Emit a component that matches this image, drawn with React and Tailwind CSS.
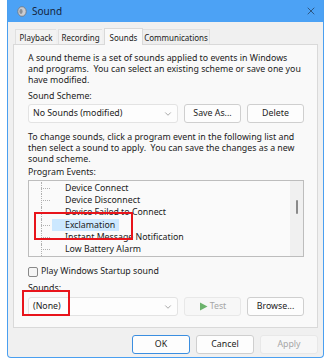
import { ChevronDown, X } from 'lucide-react';

const font = { fontFamily: '"Noto Sans", "Open Sans", sans-serif' };

function Dropdown({ value }) {
  return (
    <div className="flex-1 h-[19px] bg-[#fdfdfd] border border-[#e3e3e3] rounded-[3px] flex items-center justify-between pl-[4px] pr-[4px]">
      <span>{value}</span>
      <ChevronDown size={10} strokeWidth={1.2} className="text-[#555]" />
    </div>
  );
}

function Button({ children, disabled, primary, className = '' }) {
  return (
    <div
      className={`h-[19px] w-[57px] flex items-center justify-center rounded-[3px] border ${
        primary ? 'border-[#3b8ee0]' : disabled ? 'border-[#e8e8e8]' : 'border-[#cfcfcf]'
      } ${disabled ? 'bg-[#f7f7f7] text-[#a6a6a6]' : 'bg-[#fdfdfd] text-[#1b1b1b]'} ${className}`}
    >
      {children}
    </div>
  );
}

const events = [
  'Device Connect',
  'Device Disconnect',
  'Device Failed to Connect',
  'Exclamation',
  'Instant Message Notification',
  'Low Battery Alarm',
];

export default function App() {
  return (
    <div className="w-[335px] h-[363px] bg-white text-[8.8px] text-[#1b1b1b] leading-[11px] relative" style={font}>
      <div className="ml-[7px] w-[317px] h-[358px] border-x border-b border-[#4a9ff0] rounded-b-[4px] bg-[#f0f0f0] flex flex-col">
        {/* title bar */}
        <div className="h-[22px] bg-[#4ca2f5] flex items-center pl-[9px] pr-[6px]">
          <svg width="10" height="11" viewBox="0 0 10 11" className="mr-[5px]">
            <ellipse cx="5" cy="5.5" rx="4.2" ry="4.8" fill="#c9ccd2" stroke="#6f747b" strokeWidth="0.8" />
            <ellipse cx="4" cy="5.5" rx="1.6" ry="2.4" fill="#8a8f96" />
          </svg>
          <span className="text-[10px] text-[#14233a]">Sound</span>
          <X size={12} strokeWidth={1.3} className="ml-auto text-[#1c2e45]" />
        </div>

        {/* tabs */}
        <div className="flex items-end pl-[7px] mt-[6px] h-[16px] text-[8px]">
          <div className="h-[15px] w-[41px] flex items-center justify-center bg-[#f3f3f3] border-t border-l border-[#e0e0e0]">Playback</div>
          <div className="h-[15px] w-[44px] ml-[2px] flex items-center justify-center bg-[#f3f3f3] border-t border-l border-[#e0e0e0]">Recording</div>
          <div className="h-[17px] w-[39px] ml-[2px] flex items-center justify-center bg-[#f9f9f9] border-x border-t border-[#d9d9d9] relative top-[1px] z-10">Sounds</div>
          <div className="h-[15px] w-[67px] flex items-center justify-center bg-[#eeeeee] border-t border-r border-[#e0e0e0]">Communications</div>
        </div>

        {/* panel */}
        <div className="mx-[5px] h-[284px] bg-[#f9f9f9] border border-[#d9d9d9] pl-[14px] pr-[13px] pt-[8px] relative">
          <p>
            A sound theme is a set of sounds applied to events in Windows and programs.&nbsp; You can select an existing scheme or save one you have modified.
          </p>
          <p className="mt-[5px]">Sound Scheme:</p>
          <div className="flex gap-[6px] mt-[2px]">
            <Dropdown value="No Sounds (modified)" />
            <Button>Save As...</Button>
            <Button>Delete</Button>
          </div>
          <p className="mt-[9px]">
            To change sounds, click a program event in the following list and then select a sound to apply.&nbsp; You can save the changes as a new sound scheme.
          </p>
          <p className="mt-[2px]">Program Events:</p>
          <div className="mt-[2px] h-[77px] border border-[#bdbdbd] bg-[#fafafa] flex">
            <div className="flex-1 flex flex-col pt-[1px]">
              {events.map((e) => (
                <div key={e} className="h-[12.6px] flex items-center relative">
                  <div className="absolute left-[12px] top-0 bottom-0 border-l border-dotted border-[#b0b0b0]" />
                  <div className="ml-[12px] w-[9px] border-t border-dotted border-[#b0b0b0]" />
                  <div className={`ml-[2px] pl-[13px] pr-[4px] h-[12px] flex items-center ${e === 'Exclamation' ? 'bg-[#cce8ff]' : ''}`}>
                    {e}
                  </div>
                </div>
              ))}
            </div>
            <div className="w-[13px] bg-[#f0f0f0] flex justify-center pt-[19px]">
              <div className="w-[2px] h-[14px] bg-[#8a8a8a] rounded-full" />
            </div>
          </div>
          <div className="flex items-center mt-[9px]">
            <div className="w-[10px] h-[10px] border border-[#888] rounded-[2px] bg-[#f5f5f5] mr-[3px]" />
            <span>Play Windows Startup sound</span>
          </div>
          <p className="mt-[6px]">Sounds:</p>
          <div className="flex gap-[6px] mt-[3px]">
            <Dropdown value="(None)" />
            <Button disabled>
              <svg width="9" height="9" viewBox="0 0 9 9" className="mr-[2px]">
                <path d="M1 0.5 L8.5 4.5 L1 8.5 Z" fill="#6cb36c" />
              </svg>
              Test
            </Button>
            <Button>Browse...</Button>
          </div>

          {/* red highlight boxes */}
          <div className="absolute left-[20px] top-[167px] w-[99px] h-[28px] border-2 border-[#e8141b]" />
          <div className="absolute left-[8px] top-[245px] w-[48px] h-[26px] border-2 border-[#e8141b]" />
        </div>

        {/* bottom buttons */}
        <div className="flex justify-end gap-[6px] pr-[5px] mt-[7px]">
          <Button primary className="w-[58px]">OK</Button>
          <Button className="w-[58px]">Cancel</Button>
          <Button disabled className="w-[58px]">Apply</Button>
        </div>
      </div>
    </div>
  );
}
